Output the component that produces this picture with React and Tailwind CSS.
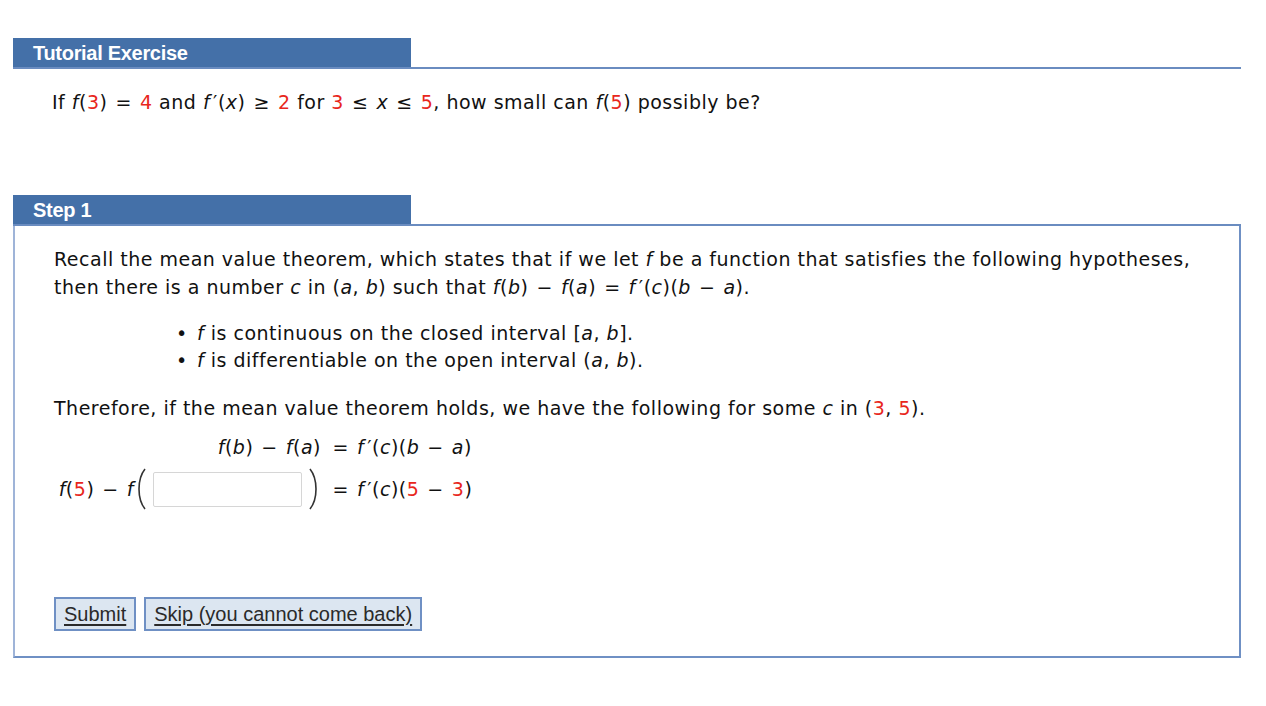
// Tutorial exercise page: question header, step box with mean value theorem recap and answer input

const R = ({ children }) => <span className="text-[#e8261c]">{children}</span>;
const I = ({ children }) => <i>{children}</i>;
const P = () => <span className="ml-[3px]">′</span>;
const Op = ({ children }) => <span className="mx-[1.5px]">{children}</span>;

function SectionBar({ title }) {
  return (
    <div className="border-b-2 border-[#6a8cc0]">
      <div className="w-[398px] h-[29px] bg-[#4470a8] pl-[20px] flex items-center">
        <span className="text-white font-bold text-[20px] leading-none [font-family:'Liberation_Sans',Arial,sans-serif] tracking-[-0.3px]">
          {title}
        </span>
      </div>
    </div>
  );
}

function Paren({ flip }) {
  return (
    <svg width="14" height="44" viewBox="0 0 14 44" className="shrink-0">
      <path
        d={flip ? 'M3 2 C11 12 11 32 3 42' : 'M11 2 C3 12 3 32 11 42'}
        fill="none"
        stroke="#333"
        strokeWidth="1.6"
      />
    </svg>
  );
}

export default function App() {
  return (
    <div className="w-[1266px] h-[706px] bg-white [font-family:'DejaVu_Sans',Verdana,sans-serif] text-[19px] tracking-[0.5px] text-[#111]">
      <div className="pt-[38px] pl-[13px] w-[1241px]">
        <SectionBar title="Tutorial Exercise" />

        {/* Question */}
        <p className="pl-[39px] pt-[19px] leading-[28px]">
          If <I>f</I>(<R>3</R>) <Op>=</Op> <R>4</R> and <I>f</I><P />(<I>x</I>) <Op>≥</Op> <R>2</R> for <R>3</R> <Op>≤</Op> <I>x</I> <Op>≤</Op> <R>5</R>, how small can <I>f</I>(<R>5</R>) possibly be?
        </p>

        <div className="mt-[79px]">
          <SectionBar title="Step 1" />
        </div>

        {/* Step box */}
        <div className="h-[432px] border-2 border-t-0 border-[#6f90c4] border-l-[#9fb4d8] flex flex-col pl-[39px] pr-[40px]">
          <p className="pt-[19px] leading-[28px]">
            Recall the mean value theorem, which states that if we let <I>f</I> be a function that satisfies the following hypotheses,
            then there is a number <I>c</I> in (<I>a</I>, <I>b</I>) such that <I>f</I>(<I>b</I>) <Op>−</Op> <I>f</I>(<I>a</I>) <Op>=</Op> <I>f</I><P />(<I>c</I>)(<I>b</I> <Op>−</Op> <I>a</I>).
          </p>

          <ul className="mt-[19px] pl-[122px] leading-[27px]">
            <li className="flex">
              <span className="w-[21px] shrink-0">•</span>
              <span><I>f</I> is continuous on the closed interval [<I>a</I>, <I>b</I>].</span>
            </li>
            <li className="flex">
              <span className="w-[21px] shrink-0">•</span>
              <span><I>f</I> is differentiable on the open interval (<I>a</I>, <I>b</I>).</span>
            </li>
          </ul>

          <p className="mt-[20px] leading-[28px]">
            Therefore, if the mean value theorem holds, we have the following for some <I>c</I> in (<R>3</R>, <R>5</R>).
          </p>

          {/* Equations */}
          <div className="mt-[11px] grid grid-cols-[277px_auto] items-center gap-y-[6px]">
            <div className="text-right pr-[10px] leading-[28px] whitespace-nowrap">
              <I>f</I>(<I>b</I>) <Op>−</Op> <I>f</I>(<I>a</I>)
            </div>
            <div className="leading-[28px] whitespace-nowrap">
              <Op>=</Op> <I>f</I><P />(<I>c</I>)(<I>b</I> <Op>−</Op> <I>a</I>)
            </div>
            <div className="flex items-center justify-end pr-[10px]">
              <span className="whitespace-nowrap">
                <I>f</I>(<R>5</R>) <Op>−</Op> <I>f</I>
              </span>
              <Paren />
              <input
                type="text"
                className="w-[149px] h-[35px] mx-[5px] border border-[#d6d6d6] rounded-[2px] bg-white"
              />
              <Paren flip />
            </div>
            <div className="leading-[28px] whitespace-nowrap">
              <Op>=</Op> <I>f</I><P />(<I>c</I>)(<R>5</R> <Op>−</Op> <R>3</R>)
            </div>
          </div>

          {/* Buttons */}
          <div className="mt-[86px] flex gap-[8px] [font-family:'Liberation_Sans',Arial,sans-serif] text-[20px] tracking-normal text-[#2a2a2a]">
            <button className="h-[34px] px-[8px] bg-[#dce6f1] border-2 border-[#6f90c4] underline underline-offset-[3px]">
              Submit
            </button>
            <button className="h-[34px] px-[8px] bg-[#dce6f1] border-2 border-[#6f90c4] underline underline-offset-[3px]">
              Skip (you cannot come back)
            </button>
          </div>
        </div>
      </div>
    </div>
  );
}
